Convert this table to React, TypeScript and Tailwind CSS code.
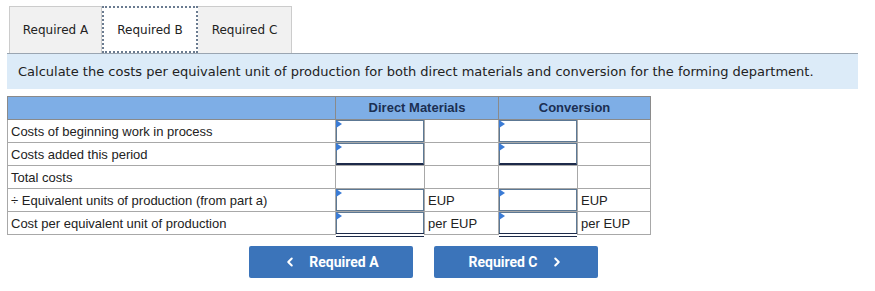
import React from 'react';
import { ChevronLeft, ChevronRight } from 'lucide-react';

const verdana = { fontFamily: '"DejaVu Sans", Verdana, sans-serif' };

function Marker() {
  return (
    <span className="absolute left-0 top-0 h-0 w-0 border-y-[4px] border-l-[6px] border-y-transparent border-l-[#3a7bd5]" />
  );
}

function AmountInput({ underline }: { underline?: 'single' | 'double' }) {
  return (
    <div className="relative h-full w-full">
      <input
        type="text"
        className={`h-[22px] w-full border border-[#5c7894] bg-white px-1 text-[12px] outline-none ${
          underline === 'single' ? 'border-b-2 border-b-[#1d2a4a]' : ''
        }`}
      />
      <Marker />
      {underline === 'double' && (
        <div className="absolute -bottom-[3px] left-0 right-0 h-[4px] border-y border-[#1d2a4a] bg-white" />
      )}
    </div>
  );
}

const rows = [
  { label: 'Costs of beginning work in process', input: true, unit: '' },
  { label: 'Costs added this period', input: true, unit: '', underline: 'single' as const },
  { label: 'Total costs', input: false, unit: '' },
  { label: '÷ Equivalent units of production (from part a)', input: true, unit: 'EUP' },
  { label: 'Cost per equivalent unit of production', input: true, unit: 'per EUP', underline: 'double' as const },
];

export default function App() {
  return (
    <div className="h-[291px] w-[875px] bg-white pt-[6px]">
      {/* Tabs */}
      <div className="ml-[9px] flex h-[47px] items-stretch" style={verdana}>
        <button className="w-[93px] border border-b-0 border-[#cccccc] bg-[#f1f1f1] text-[12px] text-[#222]">
          Required A
        </button>
        <button className="w-[96px] border-2 border-dotted border-[#6a7b90] bg-white text-[12px] text-[#222]">
          Required B
        </button>
        <button className="w-[94px] border border-b-0 border-l-0 border-[#cccccc] bg-[#f1f1f1] text-[12px] text-[#222]">
          Required C
        </button>
      </div>

      {/* Instructions */}
      <div
        className="ml-[7px] flex h-[36px] w-[851px] items-center border-t border-[#9aa5b1] bg-[#dcebf8] pl-[11px] text-[13px] text-[#222]"
        style={verdana}
      >
        Calculate the costs per equivalent unit of production for both direct materials and conversion for the forming department.
      </div>

      {/* Cost table */}
      <table
        className="ml-[7px] mt-[7px] w-[643px] table-fixed border-collapse border border-[#8a8a8a] text-[13px] text-[#222]"
        style={{ fontFamily: '"Liberation Sans", Arial, sans-serif' }}
      >
        <colgroup>
          <col className="w-[328px]" />
          <col className="w-[89px]" />
          <col className="w-[74px]" />
          <col className="w-[79px]" />
          <col className="w-[73px]" />
        </colgroup>
        <thead>
          <tr className="h-[23px] bg-[#7eaee6] text-[13px] font-bold text-[#1b2f52]">
            <th className="border border-[#8a8a8a]" />
            <th colSpan={2} className="border border-[#8a8a8a] text-center">
              Direct Materials
            </th>
            <th colSpan={2} className="border border-[#8a8a8a] text-center">
              Conversion
            </th>
          </tr>
        </thead>
        <tbody>
          {rows.map((r) => (
            <tr key={r.label} className="h-[23px]">
              <td className="whitespace-nowrap border border-[#a8a8a8] px-[3px] leading-none">{r.label}</td>
              <td className="border border-[#a8a8a8] p-0 align-top">
                {r.input && <AmountInput underline={r.underline} />}
              </td>
              <td className="border border-[#a8a8a8] px-[3px] leading-none">{r.unit}</td>
              <td className="border border-[#a8a8a8] p-0 align-top">
                {r.input && <AmountInput underline={r.underline} />}
              </td>
              <td className="border border-[#a8a8a8] px-[3px] leading-none">{r.unit}</td>
            </tr>
          ))}
        </tbody>
      </table>

      {/* Navigation */}
      <div
        className="ml-[249px] mt-[11px] flex gap-[21px] text-[14px] font-bold text-white"
        style={{ fontFamily: 'Roboto, "Liberation Sans", sans-serif' }}
      >
        <button className="flex h-[32px] w-[164px] items-center justify-center gap-[12px] rounded-[2px] bg-[#3b74ba]">
          <ChevronLeft className="h-[14px] w-[14px]" strokeWidth={3.5} />
          <span>Required A</span>
        </button>
        <button className="flex h-[32px] w-[164px] items-center justify-center gap-[12px] rounded-[2px] bg-[#3b74ba]">
          <span>Required C</span>
          <ChevronRight className="h-[14px] w-[14px]" strokeWidth={3.5} />
        </button>
      </div>
    </div>
  );
}
